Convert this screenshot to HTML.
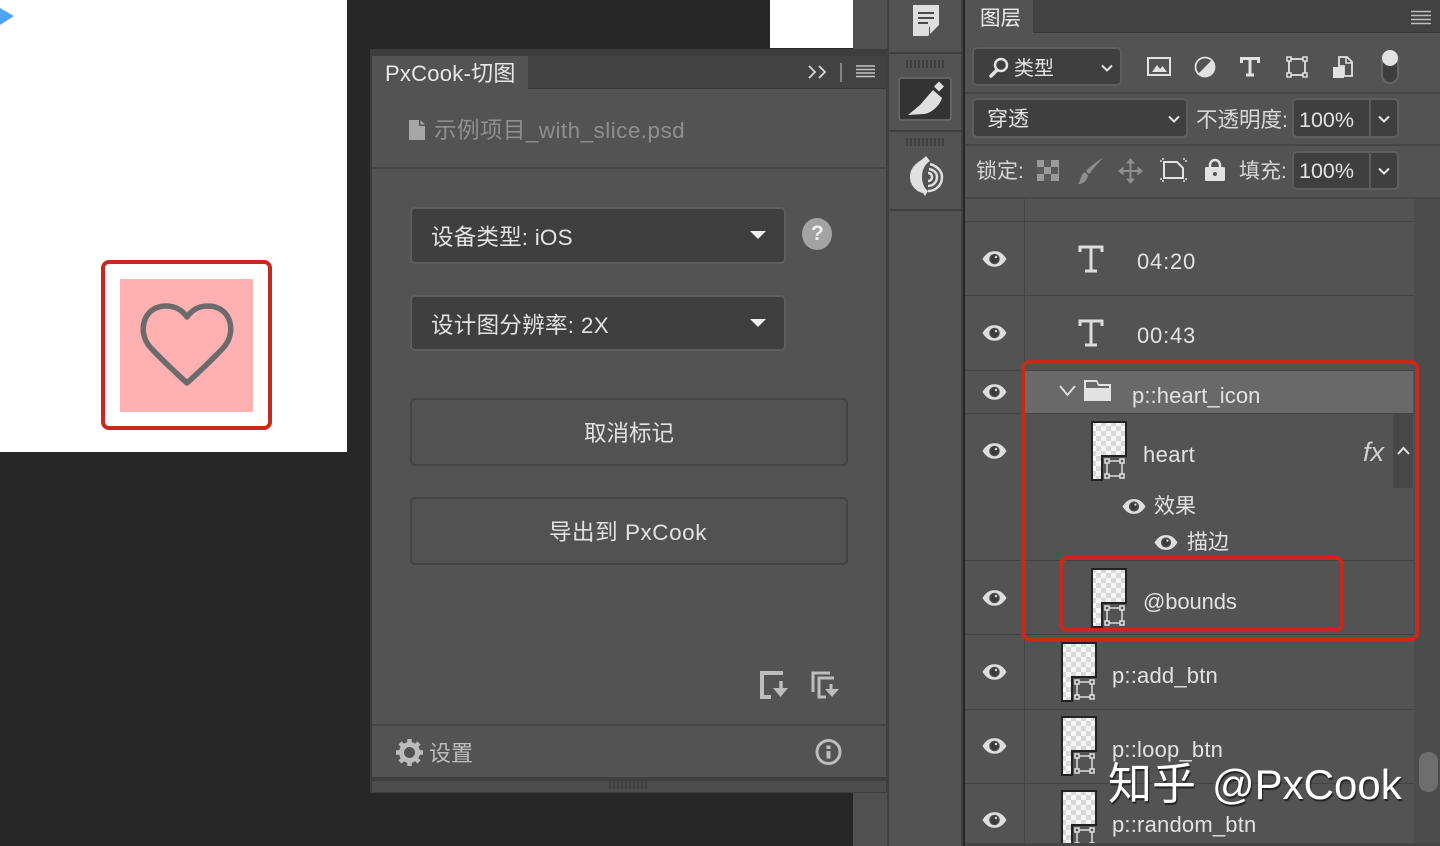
<!DOCTYPE html>
<html lang="zh"><head><meta charset="utf-8"><title>PxCook</title>
<style>
html,body{margin:0;padding:0;width:1440px;height:846px;overflow:hidden;background:#272727}
body{position:relative;font-family:"Liberation Sans","Noto Sans CJK SC",sans-serif;color:#e2e2e2}
.a{position:absolute}
.t{position:absolute;white-space:nowrap;font-size:22px;line-height:26px;height:26px}
.sel{position:absolute;box-sizing:border-box;background:#3f3f3f;border:2px solid #5e5e5e;border-radius:5px}
.btn{position:absolute;box-sizing:border-box;background:#525252;border:2px solid #444;border-radius:5px}
.grip{position:absolute;background:repeating-linear-gradient(90deg,#3e3e3e 0 2px,transparent 2px 4px)}
.red{position:absolute;box-sizing:border-box;border:4px solid #c9281d;border-radius:8px}
svg{position:absolute;overflow:visible}
.name{font-size:22px;color:#e2e2e2;letter-spacing:.2px}
</style></head><body>
<svg width="0" height="0" style="position:absolute">
<defs>
<pattern id="chk" width="10" height="10" patternUnits="userSpaceOnUse"><rect width="10" height="10" fill="#f6f6f6"/><rect width="5" height="5" fill="#d8d8d8"/><rect x="5" y="5" width="5" height="5" fill="#d8d8d8"/></pattern>
<symbol id="eye" viewBox="0 0 26 16" overflow="visible"><path d="M0.5 8C5 1 9 0 13 0s8 1 12.500 8C21 15 17 16 13 16S5 15 .5 8Z" fill="#dedede"/><circle cx="13" cy="8" r="5.500" fill="#505050"/><circle cx="13" cy="8" r="4" fill="#3a3a3a"/><circle cx="14.500" cy="6" r="1.200" fill="#ddd"/></symbol>
<symbol id="thumb" viewBox="0 0 36 60" overflow="visible"><path d="M1 1H35V35H11V59H1Z" fill="url(#chk)" stroke="#222" stroke-width="2"/><rect x="16" y="40" width="15" height="15" fill="none" stroke="#ddd" stroke-width="1.500"/><g fill="#535353" stroke="#e2e2e2" stroke-width="1.500"><rect x="14" y="38" width="4" height="4"/><rect x="29" y="38" width="4" height="4"/><rect x="14" y="53" width="4" height="4"/><rect x="29" y="53" width="4" height="4"/></g></symbol>
<symbol id="chev" viewBox="0 0 12 8" overflow="visible"><path d="M1 1.500L6 6.500L11 1.500" fill="none" stroke="#e4e4e4" stroke-width="2"/></symbol>
<symbol id="tt" viewBox="0 0 26 30" overflow="visible"><path d="M2 7V2H24V7M13 2V26M7 26H19" fill="none" stroke="#dcdcdc" stroke-width="3"/></symbol>
</defs></svg>

<!-- canvas -->
<div class="a" style="left:0;top:0;width:347px;height:452px;background:#fff"></div>
<div class="a" style="left:770px;top:0;width:83px;height:48px;background:#fff"></div>
<div class="a" style="left:853px;top:0;width:34px;height:846px;background:#505050"></div>
<svg style="left:0;top:0" width="16" height="26"><path d="M0 8L14 16L0 25Z" fill="#4da3f5"/></svg>
<div class="a" style="left:120px;top:279px;width:133px;height:133px;background:#ffb0b0"></div>
<svg style="left:0;top:0" width="347" height="452"><path d="M187 383C175 372 160 358 150 347C137 332 143 306 166 306C176 306 183 311 187 317C191 311 198 306 208 306C231 306 237 332 224 347C214 358 199 372 187 383Z" fill="none" stroke="#6b6b6b" stroke-width="5.500" stroke-linejoin="round"/></svg>
<div class="red" style="left:101px;top:260px;width:171px;height:170px"></div>

<!-- PxCook panel -->
<div class="a" style="left:370px;top:49px;width:519px;height:744px;background:#3d3d3d"></div>
<div class="a" style="left:372px;top:56px;width:514px;height:724px;background:#535353"></div>
<div class="a" style="left:528px;top:56px;width:358px;height:32px;background:#424242;border-bottom:1px solid #383838"></div>
<div class="t" style="left:385px;top:61px;letter-spacing:.25px;color:#e8e8e8">PxCook-切图</div>
<svg style="left:808px;top:64px" width="68" height="18"><path d="M1 2L7 8L1 14M11 2L17 8L11 14" fill="none" stroke="#ddd" stroke-width="1.700"/><path d="M33 -1V18" stroke="#999" stroke-width="1.500"/><path d="M48 2H67M48 5.500H67M48 9H67M48 12.500H67" stroke="#c4c4c4" stroke-width="1.500"/></svg>
<svg style="left:409px;top:120px" width="16" height="20"><path d="M0 0H10V6H16V20H0ZM11.500 0L16 4.500H11.500Z" fill="#a6a6a6"/></svg>
<div class="t" style="left:434px;top:118px;color:#8f8f8f;font-size:22.500px;letter-spacing:.45px">示例项目_with_slice.psd</div>
<div class="a" style="left:372px;top:167px;width:514px;height:2px;background:#464646"></div>

<div class="sel" style="left:410px;top:207px;width:376px;height:57px"></div>
<div class="t" style="left:431px;top:225px;font-size:22.500px;letter-spacing:.2px">设备类型: iOS</div>
<svg style="left:750px;top:231px" width="16" height="9"><path d="M0 0H16L8 8Z" fill="#efefef"/></svg>
<svg style="left:802px;top:218px" width="30" height="32"><ellipse cx="15" cy="16" rx="15" ry="16" fill="#a3a3a3"/></svg>
<div class="t" style="left:811px;top:221px;font-size:21px;font-weight:bold;color:#eee">?</div>

<div class="sel" style="left:410px;top:295px;width:376px;height:56px"></div>
<div class="t" style="left:431px;top:313px;font-size:22.500px;letter-spacing:.3px">设计图分辨率: 2X</div>
<svg style="left:750px;top:319px" width="16" height="9"><path d="M0 0H16L8 8Z" fill="#efefef"/></svg>

<div class="btn" style="left:410px;top:398px;width:438px;height:68px"></div>
<div class="t" style="left:584px;top:421px;font-size:22.500px">取消标记</div>
<div class="btn" style="left:410px;top:497px;width:438px;height:68px"></div>
<div class="t" style="left:549px;top:520px;font-size:22.500px;letter-spacing:.55px">导出到 PxCook</div>

<svg style="left:760px;top:671px" width="80" height="28" fill="none"><path d="M23 2H2V26H11" stroke="#bdbdbd" stroke-width="4"/><path d="M21 10V19" stroke="#bdbdbd" stroke-width="3.500"/><path d="M13 17H28L20.500 26Z" fill="#bdbdbd"/>
<path d="M70 2H53V21M74 7H59V26H66" stroke="#bdbdbd" stroke-width="3"/><path d="M71 13V20" stroke="#bdbdbd" stroke-width="3"/><path d="M65 18H79L72 26Z" fill="#bdbdbd"/></svg>
<div class="a" style="left:372px;top:724px;width:514px;height:2px;background:#454545"></div>
<svg style="left:396px;top:739px" width="27" height="27"><circle cx="13.500" cy="13.500" r="8" fill="none" stroke="#bcbcbc" stroke-width="5"/><g stroke="#bcbcbc" stroke-width="4.500"><path d="M13.500 0V5M13.500 22V27M0 13.500H5M22 13.500H27M4 4L7.500 7.500M19.500 19.500L23 23M23 4L19.500 7.500M7.500 19.500L4 23"/></g></svg>
<div class="t" style="left:429px;top:741px;color:#bdbdbd">设置</div>
<svg style="left:815px;top:738px" width="27" height="28"><circle cx="13.500" cy="14" r="11.500" fill="none" stroke="#bcbcbc" stroke-width="3"/><rect x="11.500" y="7.500" width="4" height="3.500" fill="#bcbcbc"/><rect x="11.500" y="13" width="4" height="7.500" fill="#bcbcbc"/></svg>
<div class="a" style="left:372px;top:777px;width:514px;height:4px;background:#3f3f3f"></div>
<div class="a" style="left:372px;top:781px;width:514px;height:11px;background:#4d4d4d"></div>
<div class="grip" style="left:609px;top:780px;width:38px;height:9px"></div>

<!-- middle dock -->
<div class="a" style="left:889px;top:0;width:72px;height:846px;background:#535353;border-left:2px solid #404040;border-right:2px solid #404040;margin-left:-2px"></div>
<div class="a" style="left:889px;top:52px;width:72px;height:2px;background:#404040"></div>
<div class="a" style="left:889px;top:130px;width:72px;height:2px;background:#404040"></div>
<div class="a" style="left:889px;top:209px;width:72px;height:2px;background:#404040"></div>
<svg style="left:912px;top:4px" width="28" height="32"><path d="M1 1H27V21L16 32H1Z" fill="#dedede"/><path d="M6 9H22M6 14H22M6 19H16" stroke="#4a4a4a" stroke-width="2"/><path d="M17 23H27L17 32Z" fill="#535353"/><path d="M18 23H25L18 30Z" fill="#dedede"/></svg>
<div class="grip" style="left:906px;top:60px;width:38px;height:8px"></div>
<div class="a" style="left:898px;top:77px;width:54px;height:44px;box-sizing:border-box;background:#333;border:2px solid #636363;border-radius:4px"></div>
<svg style="left:898px;top:77px" width="54" height="44"><path d="M10 38L22 28L35 13L44 21C42 28 34 36 26 37Z" fill="#e0e0e0"/><path d="M36 9.500L41 4.500L46 9.500L41 14.500Z" fill="#e0e0e0"/></svg>
<div class="grip" style="left:906px;top:138px;width:38px;height:8px"></div>
<svg style="left:908px;top:156px" width="36" height="40"><path d="M18 0C14 5 2 8 2 21C2 30 9 36 15 37L17 40L20 35C17 33 14 28 14 21C14 14 17 8 22 5Z" fill="#e0e0e0"/><path d="M22 8C29 10 34 15 34 21C34 30 27 35 20 35M21 13C26 14 29 17 29 21C29 26 25 30 20 30M20 17C23 17 24 19 24 21C24 23 23 25 20 25" fill="none" stroke="#e0e0e0" stroke-width="2.500"/></svg>

<!-- layers panel -->
<div class="a" style="left:965px;top:0;width:475px;height:846px;background:#535353"></div>
<div class="a" style="left:1033px;top:0;width:407px;height:32px;background:#424242;border-bottom:1px solid #383838"></div>
<div class="t" style="left:980px;top:6px;color:#ececec;font-size:20.500px">图层</div>
<svg style="left:1411px;top:10px" width="20" height="15"><path d="M0 1.500H20M0 5.500H20M0 9.500H20M0 13.500H20" stroke="#bdbdbd" stroke-width="1.500"/></svg>

<div class="sel" style="left:972px;top:47px;width:150px;height:39px"></div>
<svg style="left:989px;top:57px" width="20" height="21"><circle cx="12" cy="8" r="6" fill="none" stroke="#e2e2e2" stroke-width="2.500"/><path d="M8 13L2 19" stroke="#e2e2e2" stroke-width="3.500" stroke-linecap="round"/></svg>
<div class="t" style="left:1014px;top:56px;font-size:20px">类型</div>
<svg style="left:1101px;top:64px" width="12" height="8"><use href="#chev" width="12" height="8"/></svg>
<svg style="left:1147px;top:57px" width="24" height="20"><rect x="1" y="1" width="22" height="17" fill="none" stroke="#e2e2e2" stroke-width="2"/><path d="M5 15L10 8L13 12L15.500 9L20 15Z" fill="#e2e2e2"/></svg>
<svg style="left:1194px;top:56px" width="22" height="22"><circle cx="11" cy="11" r="9.500" fill="none" stroke="#e2e2e2" stroke-width="1.800"/><path d="M17.700 4.300A9.500 9.500 0 0 1 4.300 17.700Z" fill="#e2e2e2"/></svg>
<svg style="left:1240px;top:57px" width="20" height="20"><path d="M1.500 6V1.500H18.500V6M10 1.500V18M6 18H14" fill="none" stroke="#e2e2e2" stroke-width="3"/></svg>
<svg style="left:1286px;top:56px" width="22" height="22"><rect x="3" y="3" width="16" height="16" fill="none" stroke="#e2e2e2" stroke-width="1.800"/><g fill="#535353" stroke="#e2e2e2" stroke-width="1.500"><rect x="1" y="1" width="4" height="4"/><rect x="17" y="1" width="4" height="4"/><rect x="1" y="17" width="4" height="4"/><rect x="17" y="17" width="4" height="4"/></g></svg>
<svg style="left:1333px;top:56px" width="20" height="23"><path d="M6 1H14L19 6V20H11V10H6Z" fill="none" stroke="#e2e2e2" stroke-width="1.800"/><rect x="0" y="11" width="11" height="11" fill="#e2e2e2"/><path d="M13 1V7H19" fill="none" stroke="#e2e2e2" stroke-width="1.500"/></svg>
<div class="a" style="left:1381px;top:50px;width:18px;height:34px;box-sizing:border-box;background:#3e3e3e;border:2px solid #666;border-radius:9px"></div>
<div class="a" style="left:1382px;top:50px;width:16px;height:16px;background:#e2e2e2;border-radius:50%"></div>
<div class="a" style="left:965px;top:92px;width:475px;height:2px;background:#454545"></div>

<div class="sel" style="left:972px;top:98px;width:216px;height:40px"></div>
<div class="t" style="left:987px;top:107px;font-size:21px">穿透</div>
<svg style="left:1168px;top:115px" width="12" height="8"><use href="#chev" width="12" height="8"/></svg>
<div class="t" style="left:1196px;top:107px;color:#d8d8d8;font-size:21.500px">不透明度:</div>
<div class="sel" style="left:1292px;top:98px;width:107px;height:40px"></div>
<div class="a" style="left:1369px;top:99px;width:2px;height:38px;background:#5c5c5c"></div>
<div class="t" style="left:1299px;top:107px;font-size:21.500px">100%</div>
<svg style="left:1378px;top:115px" width="12" height="8"><use href="#chev" width="12" height="8"/></svg>
<div class="a" style="left:965px;top:144px;width:475px;height:2px;background:#454545"></div>

<div class="t" style="left:976px;top:159px;color:#d6d6d6;font-size:21px">锁定:</div>
<svg style="left:1037px;top:160px" width="22" height="21"><rect width="22" height="21" fill="#9a9a9a"/><g fill="#5a5a5a"><rect x="7" y="0" width="7" height="7"/><rect x="0" y="7" width="7" height="7"/><rect x="14" y="7" width="7" height="7"/><rect x="7" y="14" width="7" height="7"/></g></svg>
<svg style="left:1078px;top:157px" width="26" height="28"><path d="M25 1C20 6 15 12 11 17L8 14C13 9 19 4 25 1Z" fill="#8f8f8f"/><path d="M7 15L10 18.500C9 24 5 27 0 27C3 24 2 18 7 15Z" fill="#8f8f8f"/></svg>
<svg style="left:1118px;top:158px" width="25" height="26"><path d="M12.500 3V23M2 13H23" stroke="#8f8f8f" stroke-width="2"/><path d="M12.500 0L17 5.500H8ZM12.500 26L17 20.500H8ZM0 13L5.500 8.500V17.500ZM25 13L19.500 8.500V17.500Z" fill="#8f8f8f"/></svg>
<svg style="left:1160px;top:158px" width="28" height="24" fill="none"><path d="M4 4H17L23 10V20H4Z" stroke="#e2e2e2" stroke-width="2"/><path d="M0 3H2M0 21H2M25 3H27M25 21H27M3 0V2M24 0V2M3 22V24M24 22V24" stroke="#e2e2e2" stroke-width="1.500"/></svg>
<svg style="left:1205px;top:159px" width="20" height="22"><path d="M5 9V6A5 5 0 0 1 15 6V9" fill="none" stroke="#e2e2e2" stroke-width="2.500"/><rect y="8" width="20" height="14" rx="1.500" fill="#e2e2e2"/><circle cx="10" cy="15" r="2" fill="#535353"/></svg>
<div class="t" style="left:1239px;top:159px;color:#d6d6d6;font-size:21px">填充:</div>
<div class="sel" style="left:1292px;top:151px;width:107px;height:39px"></div>
<div class="a" style="left:1369px;top:152px;width:2px;height:37px;background:#5c5c5c"></div>
<div class="t" style="left:1299px;top:158px;font-size:21.500px">100%</div>
<svg style="left:1378px;top:167px" width="12" height="8"><use href="#chev" width="12" height="8"/></svg>
<div class="a" style="left:965px;top:197px;width:475px;height:2px;background:#474747"></div>

<!-- scroll column + dividers -->
<div class="a" style="left:1414px;top:199px;width:26px;height:647px;background:#4c4c4c"></div>
<div class="a" style="left:1419px;top:752px;width:19px;height:40px;background:#6e6e6e;border-radius:9px"></div>
<div class="a" style="left:1024px;top:199px;width:1px;height:647px;background:#444"></div>
<div class="a" style="left:965px;top:221px;width:449px;height:1px;background:#444"></div>
<div class="a" style="left:965px;top:295px;width:449px;height:1px;background:#444"></div>
<div class="a" style="left:965px;top:370px;width:449px;height:1px;background:#444"></div>
<div class="a" style="left:965px;top:413px;width:449px;height:1px;background:#444"></div>
<div class="a" style="left:965px;top:560px;width:449px;height:1px;background:#444"></div>
<div class="a" style="left:965px;top:634px;width:449px;height:1px;background:#444"></div>
<div class="a" style="left:965px;top:709px;width:449px;height:1px;background:#444"></div>
<div class="a" style="left:965px;top:783px;width:449px;height:1px;background:#444"></div>
<div class="a" style="left:1025px;top:371px;width:388px;height:42px;background:#696969"></div>
<div class="a" style="left:1393px;top:414px;width:20px;height:74px;background:#484848"></div>

<!-- eyes -->
<svg style="left:982px;top:251px" width="25" height="16"><use href="#eye" width="25" height="16"/></svg>
<svg style="left:982px;top:325px" width="25" height="16"><use href="#eye" width="25" height="16"/></svg>
<svg style="left:982px;top:384px" width="25" height="16"><use href="#eye" width="25" height="16"/></svg>
<svg style="left:982px;top:443px" width="25" height="16"><use href="#eye" width="25" height="16"/></svg>
<svg style="left:982px;top:590px" width="25" height="16"><use href="#eye" width="25" height="16"/></svg>
<svg style="left:982px;top:664px" width="25" height="16"><use href="#eye" width="25" height="16"/></svg>
<svg style="left:982px;top:738px" width="25" height="16"><use href="#eye" width="25" height="16"/></svg>
<svg style="left:982px;top:812px" width="25" height="16"><use href="#eye" width="25" height="16"/></svg>
<svg style="left:1122px;top:499px" width="24" height="15"><use href="#eye" width="24" height="15"/></svg>
<svg style="left:1154px;top:535px" width="24" height="15"><use href="#eye" width="24" height="15"/></svg>

<!-- rows -->
<svg style="left:1078px;top:245px" width="26" height="30"><use href="#tt" width="26" height="30"/></svg>
<div class="t name" style="left:1137px;top:249px;letter-spacing:.8px">04:20</div>
<svg style="left:1078px;top:319px" width="26" height="30"><use href="#tt" width="26" height="30"/></svg>
<div class="t name" style="left:1137px;top:323px;letter-spacing:.8px">00:43</div>

<svg style="left:1059px;top:385px" width="18" height="12"><path d="M1 1L8.500 10L16 1" fill="none" stroke="#e2e2e2" stroke-width="1.800"/></svg>
<svg style="left:1084px;top:380px" width="28" height="22"><path d="M0 21V0H13L15 4H27V21Z" fill="#e2e2e2"/><path d="M2 2H12.500L14 6H25V8H2Z" fill="#696969"/></svg>
<div class="t name" style="left:1132px;top:383px;letter-spacing:.1px">p::heart_icon</div>

<svg style="left:1091px;top:421px" width="36" height="60"><use href="#thumb" width="36" height="60"/></svg>
<div class="t name" style="left:1143px;top:442px;letter-spacing:.4px">heart</div>
<div class="t" style="left:1363px;top:439px;font-style:italic;font-size:27px;color:#d0d0d0">fx</div>
<svg style="left:1397px;top:446px" width="13" height="9"><path d="M1 8L6.500 2L12 8" fill="none" stroke="#e4e4e4" stroke-width="2"/></svg>
<div class="t" style="left:1154px;top:494px;font-size:21px">效果</div>
<div class="t" style="left:1187px;top:530px;font-size:21px">描边</div>

<svg style="left:1091px;top:568px" width="36" height="60"><use href="#thumb" width="36" height="60"/></svg>
<div class="t name" style="left:1143px;top:589px;letter-spacing:-.1px">@bounds</div>

<svg style="left:1061px;top:642px" width="36" height="60"><use href="#thumb" width="36" height="60"/></svg>
<div class="t name" style="left:1112px;top:663px">p::add_btn</div>
<svg style="left:1061px;top:716px" width="36" height="60"><use href="#thumb" width="36" height="60"/></svg>
<div class="t name" style="left:1112px;top:737px">p::loop_btn</div>
<svg style="left:1061px;top:790px" width="36" height="60"><use href="#thumb" width="36" height="60"/></svg>
<div class="t name" style="left:1112px;top:812px">p::random_btn</div>

<div class="a" style="left:965px;top:843px;width:475px;height:3px;background:#454545"></div>

<!-- red highlight -->
<div class="red" style="left:1021px;top:360px;width:398px;height:281px"></div>
<div class="red" style="left:1059px;top:556px;width:285px;height:76px"></div>

<!-- watermark -->
<div class="t" style="left:1108px;top:760px;height:50px;line-height:50px;font-size:44px;color:#fff;text-shadow:1px 2px 1px #222">知乎</div>
<div class="t" style="left:1212px;top:760px;height:50px;line-height:50px;font-size:42px;color:#fff;text-shadow:1px 2px 1px #222">@PxCook</div>
</body></html>
